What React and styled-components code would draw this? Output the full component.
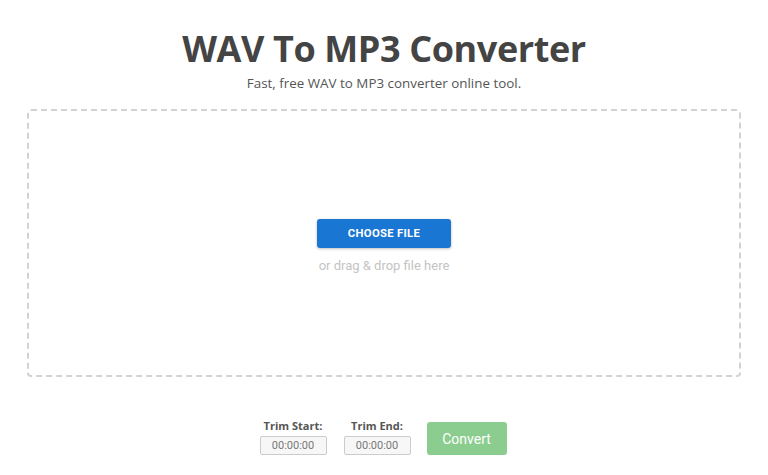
import styled, { createGlobalStyle } from "styled-components";

const GlobalStyle = createGlobalStyle`
	body {
		margin: 0;
		background: #fff;
		font-family: "Open Sans", sans-serif;
	}
`;

const Page = styled.div`
	width: 768px;
	display: flex;
	flex-direction: column;
	align-items: center;
	padding-top: 24px;
	box-sizing: border-box;
`;

const Title = styled.h1`
	margin: 0;
	font-size: 36px;
	font-weight: 700;
	color: #444;
	line-height: 50px;
	letter-spacing: -0.4px;
`;

const Subtitle = styled.p`
	margin: 0;
	font-size: 13.4px;
	color: #555;
	line-height: 18px;
`;

const DropZone = styled.div`
	margin-top: 17px;
	width: 714px;
	height: 268px;
	box-sizing: border-box;
	border: 2px dashed #d2d2d2;
	border-radius: 4px;
	display: flex;
	flex-direction: column;
	align-items: center;
	justify-content: center;
	padding-top: 6px;
`;

const ChooseButton = styled.button`
	width: 134px;
	height: 29px;
	border: none;
	border-radius: 3px;
	background: #1976d2;
	color: #fff;
	font-family: Roboto, sans-serif;
	font-weight: 700;
	font-size: 11.3px;
	letter-spacing: 0.3px;
	text-transform: uppercase;
	box-shadow: 0 1px 3px rgba(0, 0, 0, 0.25);
	cursor: pointer;
`;

const DropHint = styled.span`
	margin-top: 10px;
	font-family: Roboto, sans-serif;
	font-size: 13px;
	color: #c4c4c4;
`;

const Controls = styled.div`
	margin-top: 41px;
	margin-right: 2px;
	display: flex;
	align-items: flex-end;
	gap: 16px;
`;

const Field = styled.label`
	display: flex;
	flex-direction: column;
	align-items: center;
	gap: 3px;
	margin-right: ${(p) => (p.$wide ? "1px" : "0")};

	.name {
		font-size: 11px;
		font-weight: 700;
		color: #555;
	}
`;

const TimeInput = styled.input`
	width: 67px;
	height: 19px;
	box-sizing: border-box;
	border: 1px solid #ccc;
	border-radius: 2px;
	background: #f7f7f7;
	text-align: center;
	font-family: Roboto, sans-serif;
	font-size: 11px;
	color: #777;
	padding: 0;
`;

const ConvertButton = styled.button`
	width: 80px;
	height: 33px;
	border: none;
	border-radius: 3px;
	background: #8bcc8f;
	color: #fff;
	font-family: Roboto, sans-serif;
	font-size: 14px;
	cursor: default;
`;

const App = () => {
	return (
		<>
			<GlobalStyle />
			<Page>
				<Title>WAV To MP3 Converter</Title>
				<Subtitle>Fast, free WAV to MP3 converter online tool.</Subtitle>
				<DropZone>
					<ChooseButton>Choose File</ChooseButton>
					<DropHint>or drag &amp; drop file here</DropHint>
				</DropZone>
				<Controls>
					<Field $wide>
						<span className="name">Trim Start:</span>
						<TimeInput defaultValue="00:00:00" />
					</Field>
					<Field>
						<span className="name">Trim End:</span>
						<TimeInput defaultValue="00:00:00" />
					</Field>
					<ConvertButton disabled>Convert</ConvertButton>
				</Controls>
			</Page>
		</>
	);
};

export default App;
